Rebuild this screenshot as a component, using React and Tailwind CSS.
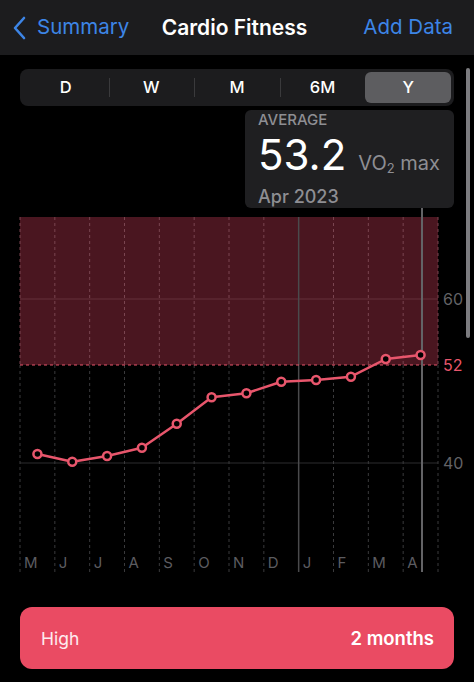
import React from "react";

const segments = ["D", "W", "M", "6M", "Y"];
const months = ["M", "J", "J", "A", "S", "O", "N", "D", "J", "F", "M", "A"];
// y positions in page coords
const points = [454, 461.7, 456, 447.7, 423.7, 397.3, 393.3, 381.7, 380, 376.7, 359, 355];

const LEFT = 20;
const RIGHT = 438;
const COL = (RIGHT - LEFT) / 12;

const Chart = () => {
  const xs = points.map((_, i) => LEFT + COL * (i + 0.5));
  const line = points.map((y, i) => `${i === 0 ? "M" : "L"}${xs[i].toFixed(1)} ${y}`).join(" ");
  return (
    <svg width="474" height="494" viewBox="0 106 474 494" className="block">
      <rect x={LEFT} y="217" width={RIGHT - LEFT} height="148" fill="#4a1620" />
      <line x1={LEFT} x2={RIGHT} y1="299" y2="299" stroke="#65303a" strokeWidth="1" />
      <line x1={LEFT} x2={RIGHT} y1="463" y2="463" stroke="#2c2c2e" strokeWidth="1" />
      {Array.from({ length: 13 }).map((_, i) => {
        const x = LEFT + COL * i;
        if (i === 8) return null;
        return (
          <g key={i}>
            <line x1={x} x2={x} y1="217" y2="365" stroke="#7a4550" strokeWidth="1" strokeDasharray="3 3" />
            <line x1={x} x2={x} y1="365" y2="572" stroke="#3a3a3c" strokeWidth="1" strokeDasharray="3 3" />
          </g>
        );
      })}
      <line x1={LEFT + COL * 8} x2={LEFT + COL * 8} y1="217" y2="572" stroke="#4a4a4c" strokeWidth="1.5" />
      <line x1={LEFT} x2={RIGHT} y1="365" y2="365" stroke="#e8566c" strokeWidth="1.2" strokeDasharray="3 3" />
      <line x1="422" x2="422" y1="208" y2="572" stroke="#636366" strokeWidth="2" />
      <path d={line} fill="none" stroke="#e8566c" strokeWidth="2.5" strokeLinejoin="round" />
      {points.map((y, i) => (
        <circle key={i} cx={xs[i]} cy={y} r="4" fill="#000" stroke="#e8566c" strokeWidth="2.5" />
      ))}
      <text x="443" y="305" fill="#636366" fontSize="16" fontFamily="Inter, sans-serif">60</text>
      <text x="443" y="371" fill="#e8566c" fontSize="16" fontFamily="Inter, sans-serif">52</text>
      <text x="443" y="469" fill="#636366" fontSize="16" fontFamily="Inter, sans-serif">40</text>
      {months.map((m, i) => (
        <text key={i} x={LEFT + COL * i + 4} y="568" fill="#5c5c60" fontSize="15" fontFamily="Inter, sans-serif">
          {m}
        </text>
      ))}
    </svg>
  );
};

const App = () => {
  return (
    <div className="relative w-[474px] h-[682px] bg-black overflow-hidden" style={{ fontFamily: "Inter, 'Liberation Sans', sans-serif" }}>
      <div className="grid grid-cols-[1fr_auto_1fr] items-center h-[55px] bg-[#1c1c1e] pl-3 pr-[21px]">
        <div className="flex items-center gap-[11px] text-[#3d85e6] text-[20.5px]">
          <svg width="14" height="24" viewBox="0 0 14 24" fill="none">
            <path d="M12 2 L3 12 L12 22" stroke="#3d85e6" strokeWidth="2.6" strokeLinecap="round" strokeLinejoin="round" />
          </svg>
          <span>Summary</span>
        </div>
        <span className="text-white text-[21px] font-semibold pl-1">Cardio Fitness</span>
        <span className="text-[#3d85e6] text-[20.5px] justify-self-end">Add Data</span>
      </div>

      <div className="mx-5 mt-[14px] h-[37px] rounded-lg bg-[#1c1c1e] flex items-center p-[3px]">
        {segments.map((s, i) => (
          <div key={s} className="flex-1 h-full flex items-center relative">
            {i > 0 && i < 4 && <div className="absolute left-0 w-px h-[19px] bg-[#3a3a3c]" />}
            <div
              className={
                s === "Y"
                  ? "flex-1 h-full flex items-center justify-center rounded-md bg-[#5d5d60] text-white text-[16.5px] font-medium"
                  : "flex-1 h-full flex items-center justify-center text-white text-[16.5px] font-medium"
              }
            >
              {s}
            </div>
          </div>
        ))}
      </div>

      <div className="relative">
        <Chart />
        <div className="absolute left-[245px] top-[4px] w-[209px] h-[98px] rounded-md bg-[#1f1f21] pl-[13px] pt-[2px]">
          <div className="text-[#8e8e93] text-[15px] leading-[16px] font-medium">AVERAGE</div>
          <div className="flex items-baseline gap-3 leading-[44px] mt-[5px]">
            <span className="text-white text-[42px]">53.2</span>
            <span className="text-[#8e8e93] text-[20px]">
              VO<span className="text-[13px] relative top-[3px]">2</span> max
            </span>
          </div>
          <div className="text-[#8e8e93] text-[18px] leading-[22px] font-medium -mt-[1px]">Apr 2023</div>
        </div>
      </div>

      <div className="mx-5 mt-[7px] h-[62px] rounded-xl bg-[#ea4b63] flex items-center justify-between pl-[21px] pr-5">
        <span className="text-white/90 text-[17.5px] pt-[2px]">High</span>
        <span className="text-white text-[18.5px] font-semibold pt-[2px]">2 months</span>
      </div>

      <div className="absolute left-[466px] top-[68px] w-[4px] h-[270px] rounded-full bg-[#7c7c80]" />
    </div>
  );
};

export default App;
